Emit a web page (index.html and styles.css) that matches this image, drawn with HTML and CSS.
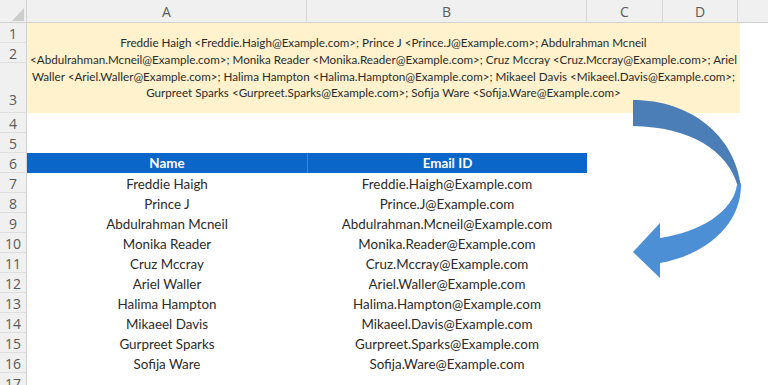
FILE: index.html
```html
<!DOCTYPE html>
<html>
<head>
<meta charset="utf-8">
<link rel="stylesheet" href="styles.css">
</head>
<body>
<div class="sheet">
  <div class="colhead">
    <div class="corner"><span class="tri"></span></div>
    <div class="ch w-a">A</div>
    <div class="ch w-b">B</div>
    <div class="ch w-c">C</div>
    <div class="ch w-d">D</div>
    <div class="ch w-e"></div>
  </div>

  <div class="band">
    <div class="rh-stack">
      <div class="rh">1</div>
      <div class="rh">2</div>
      <div class="rh tall">3</div>
    </div>
    <div class="merged">
      <span class="ln">Freddie Haigh &lt;Freddie.Haigh@Example.com&gt;; Prince J &lt;Prince.J@Example.com&gt;; Abdulrahman Mcneil</span>
      <span class="ln">&lt;Abdulrahman.Mcneil@Example.com&gt;; Monika Reader &lt;Monika.Reader@Example.com&gt;; Cruz Mccray &lt;Cruz.Mccray@Example.com&gt;; Ariel</span>
      <span class="ln">Waller &lt;Ariel.Waller@Example.com&gt;; Halima Hampton &lt;Halima.Hampton@Example.com&gt;; Mikaeel Davis &lt;Mikaeel.Davis@Example.com&gt;;</span>
      <span class="ln">Gurpreet Sparks &lt;Gurpreet.Sparks@Example.com&gt;; Sofija Ware &lt;Sofija.Ware@Example.com&gt;</span>
    </div>
  </div>

  <div class="row"><div class="rh">4</div></div>
  <div class="row"><div class="rh">5</div></div>
  <div class="row"><div class="rh">6</div><div class="cell w-a th">Name</div><div class="cell w-b th th-b">Email ID</div></div>
  <div class="row"><div class="rh">7</div><div class="cell w-a">Freddie Haigh</div><div class="cell w-b">Freddie.Haigh@Example.com</div></div>
  <div class="row"><div class="rh">8</div><div class="cell w-a">Prince J</div><div class="cell w-b">Prince.J@Example.com</div></div>
  <div class="row"><div class="rh">9</div><div class="cell w-a">Abdulrahman Mcneil</div><div class="cell w-b">Abdulrahman.Mcneil@Example.com</div></div>
  <div class="row"><div class="rh">10</div><div class="cell w-a">Monika Reader</div><div class="cell w-b">Monika.Reader@Example.com</div></div>
  <div class="row"><div class="rh">11</div><div class="cell w-a">Cruz Mccray</div><div class="cell w-b">Cruz.Mccray@Example.com</div></div>
  <div class="row"><div class="rh">12</div><div class="cell w-a">Ariel Waller</div><div class="cell w-b">Ariel.Waller@Example.com</div></div>
  <div class="row"><div class="rh">13</div><div class="cell w-a">Halima Hampton</div><div class="cell w-b">Halima.Hampton@Example.com</div></div>
  <div class="row"><div class="rh">14</div><div class="cell w-a">Mikaeel Davis</div><div class="cell w-b">Mikaeel.Davis@Example.com</div></div>
  <div class="row"><div class="rh">15</div><div class="cell w-a">Gurpreet Sparks</div><div class="cell w-b">Gurpreet.Sparks@Example.com</div></div>
  <div class="row"><div class="rh">16</div><div class="cell w-a">Sofija Ware</div><div class="cell w-b">Sofija.Ware@Example.com</div></div>
  <div class="row"><div class="rh">17</div></div>

  <svg class="arrow" viewBox="0 0 768 385" width="768" height="385" aria-hidden="true">
    <path class="arrow-top" d="M633,100 C690,100 735,135 741,187 L738,187 C728,150 690,127 633,126 Z"/>
    <path class="arrow-low" d="M741,183 C742,225 705,255 660,263 L660,278 L633,252 L660,223 L660,238 C700,232 733,212 737,185 Z"/>
  </svg>
</div>
</body>
</html>
```

FILE: styles.css
```css
* { box-sizing: border-box; }
html, body { margin: 0; padding: 0; background: #ffffff; }
body {
  width: 768px;
  height: 385px;
  overflow: hidden;
  font-family: "Lato", "Liberation Sans", sans-serif;
  color: #2b2b2b;
}
.sheet { position: relative; width: 768px; height: 385px; overflow: hidden; }

.colhead {
  display: flex;
  height: 23px;
  background: #f0f0f0;
  border-bottom: 1px solid #d2d2d2;
}
.corner {
  position: relative;
  width: 27px;
  flex: none;
  border-right: 1px solid #d2d2d2;
}
.tri {
  position: absolute;
  right: 2px;
  bottom: 1px;
  width: 0;
  height: 0;
  border-left: 12px solid transparent;
  border-bottom: 13px solid #cdcdcd;
}
.ch {
  flex: none;
  border-right: 1px solid #d8d8d8;
  text-align: center;
  font-family: "Open Sans", "Noto Sans", sans-serif;
  font-size: 14px;
  line-height: 24px;
  color: #5a5a5a;
}
.w-a { width: 280px; flex: none; }
.w-b { width: 280px; flex: none; }
.w-c { width: 76px; }
.w-d { width: 75px; }
.w-e { flex: 1; border-right: none; }

.band { display: flex; height: 90px; }
.rh-stack { display: flex; flex-direction: column; width: 27px; flex: none; }
.rh {
  width: 27px;
  height: 20px;
  flex: none;
  background: #f0f0f0;
  border-right: 1px solid #d2d2d2;
  border-bottom: 1px solid #dedede;
  text-align: center;
  font-family: "Open Sans", "Noto Sans", sans-serif;
  font-size: 14px;
  line-height: 21px;
  color: #5a5a5a;
}
.rh.tall { height: 50px; line-height: 74px; }
.merged {
  width: 713px;
  flex: none;
  background: #fff2cc;
  display: flex;
  flex-direction: column;
  align-items: center;
  justify-content: center;
  padding-top: 1px;
  font-size: 11.65px;
  line-height: 16.7px;
}
.ln { white-space: nowrap; }

.row { display: flex; height: 20px; }
.cell {
  height: 20px;
  text-align: center;
  font-size: 13.4px;
  line-height: 17px;
  padding-top: 3px;
  white-space: nowrap;
}
.th {
  background: #0a66c8;
  color: #ffffff;
  font-weight: 700;
  padding-top: 2px;
}
.th-b { border-left: 1px solid #3c86d6; }

.arrow {
  position: absolute;
  left: 0;
  top: 0;
  pointer-events: none;
}
.arrow-top { fill: #4b7db7; }
.arrow-low { fill: #4d8fd5; }
```
